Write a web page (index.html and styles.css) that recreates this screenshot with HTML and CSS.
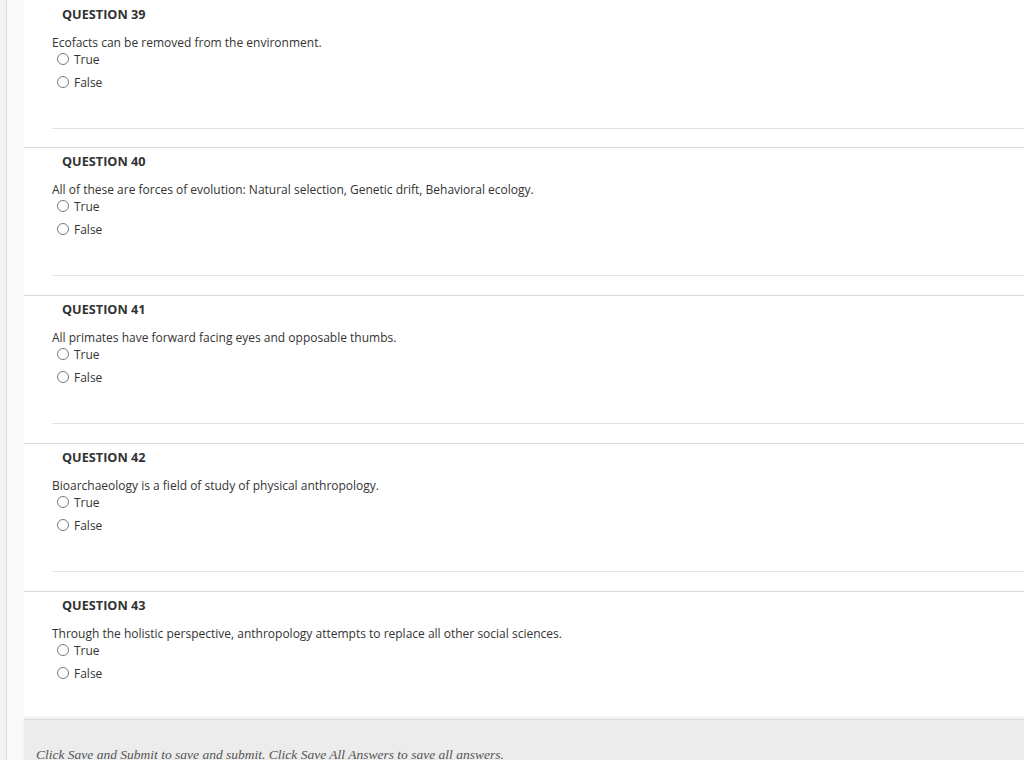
FILE: index.html
```html
<!DOCTYPE html>
<html>
<head>
<meta charset="utf-8">
<link rel="stylesheet" href="styles.css">
</head>
<body>
<div class="page">
  <div class="rail"></div>
  <div class="gutter"></div>
  <div class="content">
    <section class="question first">
      <h3 class="q-title">QUESTION 39</h3>
      <p class="q-text">Ecofacts can be removed from the environment.</p>
      <label class="option"><span class="radio"></span>True</label>
      <label class="option gap"><span class="radio"></span>False</label>
      <div class="q-rule"></div>
    </section>
    <section class="question">
      <h3 class="q-title">QUESTION 40</h3>
      <p class="q-text">All of these are forces of evolution: Natural selection, Genetic drift, Behavioral ecology.</p>
      <label class="option"><span class="radio"></span>True</label>
      <label class="option gap"><span class="radio"></span>False</label>
      <div class="q-rule"></div>
    </section>
    <section class="question">
      <h3 class="q-title">QUESTION 41</h3>
      <p class="q-text">All primates have forward facing eyes and opposable thumbs.</p>
      <label class="option"><span class="radio"></span>True</label>
      <label class="option gap"><span class="radio"></span>False</label>
      <div class="q-rule"></div>
    </section>
    <section class="question">
      <h3 class="q-title">QUESTION 42</h3>
      <p class="q-text">Bioarchaeology is a field of study of physical anthropology.</p>
      <label class="option"><span class="radio"></span>True</label>
      <label class="option gap"><span class="radio"></span>False</label>
      <div class="q-rule"></div>
    </section>
    <section class="question last">
      <h3 class="q-title">QUESTION 43</h3>
      <p class="q-text">Through the holistic perspective, anthropology attempts to replace all other social sciences.</p>
      <label class="option"><span class="radio"></span>True</label>
      <label class="option gap"><span class="radio"></span>False</label>
    </section>
    <div class="footer">
      <p class="footer-note">Click Save and Submit to save and submit. Click Save All Answers to save all answers.</p>
    </div>
  </div>
</div>
</body>
</html>
```
FILE: styles.css
```css
html, body {
  margin: 0;
  padding: 0;
  background: #ffffff;
}
body {
  font-family: "Open Sans", "DejaVu Sans", sans-serif;
  color: #333333;
  height: 760px;
  overflow: hidden;
}
.page {
  display: flex;
  min-height: 760px;
}
.rail {
  width: 6px;
  background: #f3f3f3;
  border-right: 1px solid #dedede;
  flex: none;
}
.gutter {
  width: 17px;
  background: #fafafa;
  flex: none;
}
.content {
  flex: 1;
  background: #ffffff;
}
.question {
  border-top: 1px solid #d9d9d9;
  padding-top: 4px;
}
.question.first {
  border-top: none;
  padding-top: 5px;
}
.question.first .q-rule {
  margin-bottom: 18px;
}
.q-title {
  margin: 0 0 0 38px;
  font-size: 12.7px;
  font-weight: 700;
  line-height: 18px;
  color: #333333;
}
.q-text {
  margin: 12px 0 0 28px;
  font-size: 12px;
  line-height: 15px;
}
.option {
  display: flex;
  align-items: center;
  height: 18px;
  margin-left: 33px;
  font-size: 12px;
}
.option.gap {
  margin-top: 5px;
}
.radio {
  width: 10px;
  height: 10px;
  border: 1px solid #7a7a7a;
  border-radius: 50%;
  margin-right: 5px;
  flex: none;
}
.q-rule {
  margin: 37px 0 19px 28px;
  border-top: 1px solid #e3e3e3;
}
.question.last {
  padding-bottom: 37px;
}
.footer {
  background: #ececec;
  box-shadow: 0 -2px 3px rgba(0, 0, 0, 0.08);
  border-top: 1px solid #dddddd;
  padding: 27px 12px 20px;
}
.footer-note {
  margin: 0;
  font-family: "Liberation Serif", Georgia, serif;
  font-style: italic;
  font-size: 13.5px;
  color: #555555;
}
```
